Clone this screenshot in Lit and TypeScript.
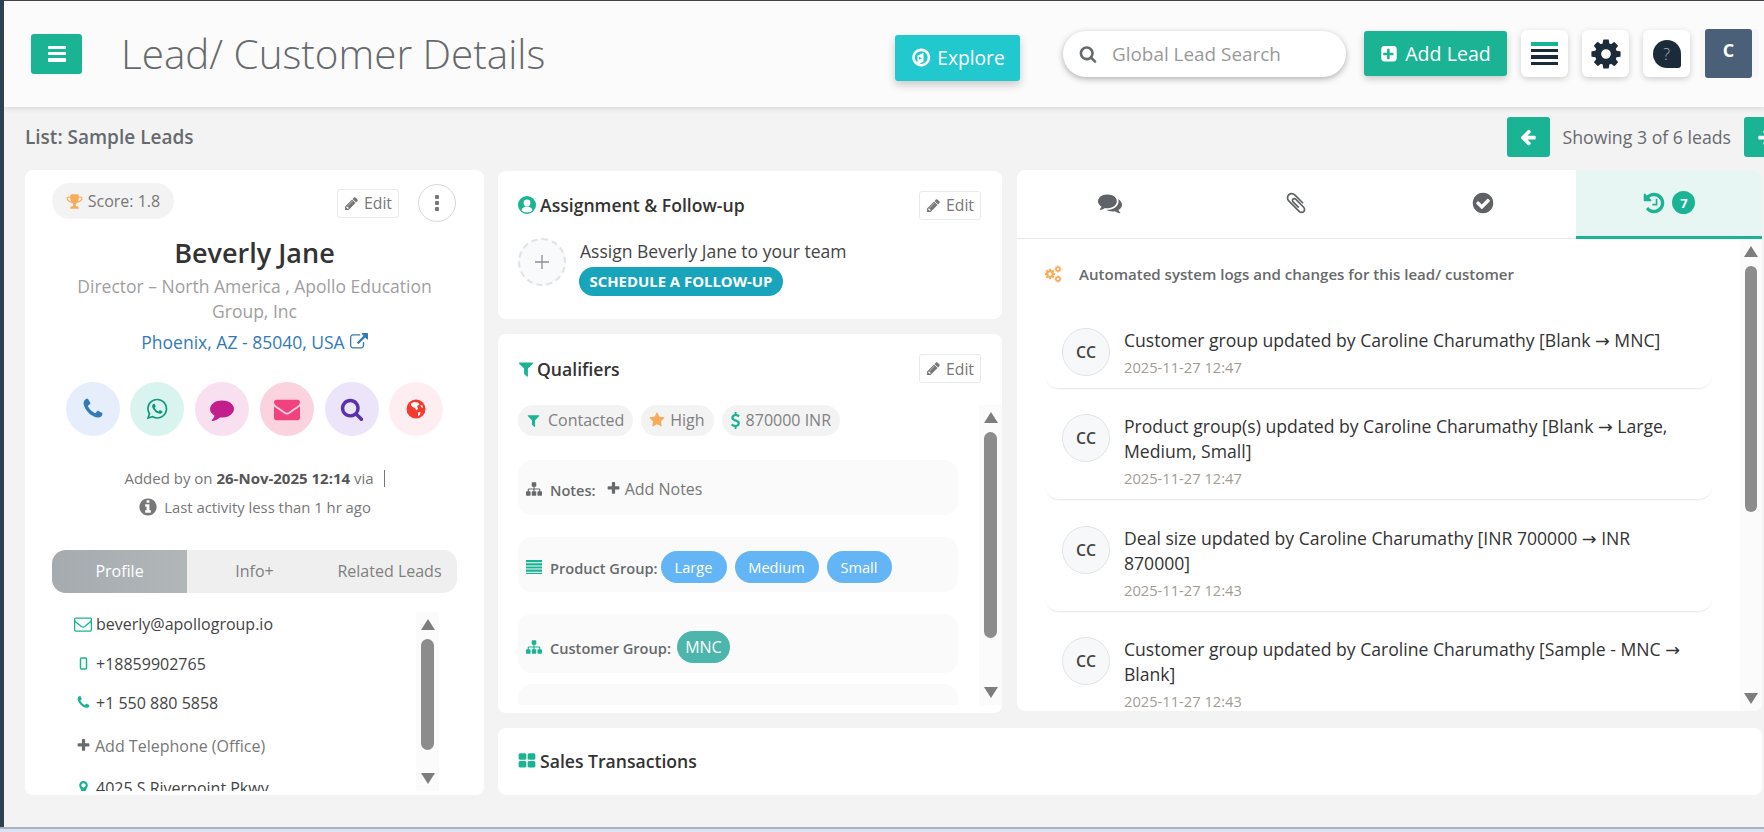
import { LitElement, html, css } from "lit";
import { customElement } from "lit/decorators.js";

const P: Record<string, string> = {
  search: "M1216 832q0-185-131.500-316.500t-316.500-131.500-316.500 131.500-131.500 316.500 131.500 316.500 316.500 131.500 316.500-131.500 131.500-316.500zm512 832q0 52-38 90t-90 38q-54 0-90-38l-343-342q-179 124-399 124-143 0-273.500-55.500t-225-150-150-225-55.500-273.500 55.500-273.500 150-225 225-150 273.500-55.500 273.500 55.500 225 150 150 225 55.500 273.500q0 220-124 399l343 343q37 37 37 90z",
  phone: "M1600 1240q0 27-10 70.500t-21 68.500q-21 50-122 106-94 51-186 51-27 0-53-3.500t-57.500-12.500-47-14.500-55.500-20.500-49-18q-98-35-175-83-127-79-264-216t-216-264q-48-77-83-175-3-9-18-49t-20.500-55.500-14.500-47-12.500-57.500-3.500-53q0-92 51-186 56-101 106-122 25-11 68.500-21t70.500-10q14 0 21 3 18 6 53 76 11 19 30 54t35 63.500 31 53.500q3 4 17.500 25t21.500 35.500 7 28.500q0 20-28.500 50t-62 55-62 53-28.500 46q0 9 5 22.500t8.500 20.500 14 24 11.500 19q76 137 174 235t235 174q2 1 19 11.500t24 14 20.500 8.500 22.500 5q18 0 46-28.500t53-62 55-62 50-28.500q14 0 28.500 7t35.500 21.500 25 17.500q25 15 53.500 31t63.500 35 54 30q70 35 76 53 3 7 3 21z",
  pencil: "M491 1536l91-91-235-235-91 91v107h128v128h107zm523-928q0-22-22-22-10 0-17 7l-542 542q-7 7-7 17 0 22 22 22 10 0 17-7l542-542q7-7 7-17zm-54-192l416 416-832 832h-416v-416zm683 96q0 53-37 90l-166 166-416-416 166-165q36-38 90-38 53 0 91 38l235 234q37 39 37 91z",
  filter: "M1595 295q17 41-14 70l-493 493v742q0 42-39 59-13 5-25 5-27 0-45-19l-256-256q-19-19-19-45v-486l-493-493q-31-29-14-70 17-39 59-39h1280q42 0 59 39z",
  star: "M1728 647q0 22-26 48l-363 354 86 500q1 7 1 20 0 21-10.500 35.500t-30.500 14.500q-19 0-40-12l-449-236-449 236q-22 12-40 12-21 0-31.500-14.500t-10.500-35.500q0-6 2-20l86-500-364-354q-25-27-25-48 0-37 56-46l502-73 225-455q19-41 49-41t49 41l225 455 502 73q56 9 56 46z",
  envelope: "M1792 710v794q0 66-47 113t-113 47h-1472q-66 0-113-47t-47-113v-794q44 49 101 87 362 246 497 345 57 42 92.500 65.500t94.500 48 110 24.500h2q51 0 110-24.500t94.500-48 92.500-65.500q170-123 498-345 57-39 100-87zm0-294q0 79-49 151t-122 123q-376 261-468 325-10 7-42.500 30.500t-54 38-52 32.500-57.500 27-50 9h-2q-23 0-50-9t-57.500-27-52-32.500-54-38-42.500-30.500q-91-64-262-182.500t-205-142.500q-62-42-117-115.500t-55-136.500q0-78 41.500-130t118.500-52h1472q65 0 112.500 47t47.500 113z",
  envelopeO: "M1664 1504v-768q-32 36-69 66-268 206-426 338-51 43-83 67t-86.500 48.500-102.500 24.500h-2q-48 0-102.500-24.500t-86.500-48.500-83-67q-158-132-426-338-37-30-69-66v768q0 13 9.500 22.500t22.500 9.500h1472q13 0 22.500-9.500t9.500-22.500zm0-1051v-24.500l-.5-13-3-12.500-5.500-9-9-7.500-14-2.500h-1472q-13 0-22.500 9.500t-9.500 22.500q0 168 147 284 193 152 401 317 6 5 35 29.500t46 37.500 44.500 31.500 50.500 27.500 43 9h2q20 0 43-9t50.500-27.500 44.500-31.500 46-37.500 35-29.500q208-165 401-317 54-43 100.500-115.500t46.500-131.500zm128-37v1088q0 66-47 113t-113 47h-1472q-66 0-113-47t-47-113v-1088q0-66 47-113t113-47h1472q66 0 113 47t47 113z",
  marker: "M1152 640q0-106-75-181t-181-75-181 75-75 181 75 181 181 75 181-75 75-181zm256 0q0 109-33 179l-364 774q-16 33-47.500 52t-67.500 19-67.500-19-46.500-52l-365-774q-33-70-33-179 0-212 150-362t362-150 362 150 150 362z",
  plus: "M1600 736v192q0 40-28 68t-68 28h-416v416q0 40-28 68t-68 28h-192q-40 0-68-28t-28-68v-416h-416q-40 0-68-28t-28-68v-192q0-40 28-68t68-28h416v-416q0-40 28-68t68-28h192q40 0 68 28t28 68v416h416q40 0 68 28t28 68z",
  trophy: "M522 883q-74-162-74-371h-256v96q0 78 94.500 162t235.500 113zm1078-275v-96h-256q0 209-74 371 141-29 235.500-113t94.500-162zm128-128v128q0 71-41.500 143t-112 130-173 97.500-215.500 44.500q-42 54-95 95-38 34-52.500 72.500t-14.500 89.500q0 54 30.500 91t97.500 37q75 0 133.500 45.500t58.500 114.500v64q0 14-9 23t-23 9h-832q-14 0-23-9t-9-23v-64q0-69 58.500-114.500t133.500-45.500q67 0 97.500-37t30.500-91q0-51-14.500-89.500t-52.500-72.500q-53-41-95-95-113-5-215.500-44.500t-173-97.500-112-130-41.500-143v-128q0-40 28-68t68-28h288v-96q0-66 47-113t113-47h576q66 0 113 47t47 113v96h288q40 0 68 28t28 68z",
  info: "M1152 1376v-160q0-14-9-23t-23-9h-96v-512q0-14-9-23t-23-9h-320q-14 0-23 9t-9 23v160q0 14 9 23t23 9h96v320h-96q-14 0-23 9t-9 23v160q0 14 9 23t23 9h448q14 0 23-9t9-23zm-128-896v-160q0-14-9-23t-23-9h-192q-14 0-23 9t-9 23v160q0 14 9 23t23 9h192q14 0 23-9t9-23zm640 416q0 209-103 385.500t-279.500 279.500-385.500 103-385.500-103-279.500-279.500-103-385.500 103-385.500 279.500-279.500 385.500-103 385.500 103 279.500 279.500 103 385.500z",
  check: "M1412 734q0-28-18-46l-91-90q-19-19-45-19t-45 19l-408 407-226-226q-19-19-45-19t-45 19l-91 90q-18 18-18 46 0 27 18 45l362 362q19 19 45 19 27 0 46-19l543-543q18-18 18-45zm252 162q0 209-103 385.500t-279.500 279.500-385.500 103-385.500-103-279.500-279.500-103-385.500 103-385.500 279.500-279.500 385.500-103 385.500 103 279.500 279.500 103 385.500z",
  plusSq: "M1344 960v-128q0-26-19-45t-45-19h-320v-320q0-26-19-45t-45-19h-128q-26 0-45 19t-19 45v320h-320q-26 0-45 19t-19 45v128q0 26 19 45t45 19h320v320q0 26 19 45t45 19h128q26 0 45-19t19-45v-320h320q26 0 45-19t19-45zm320-576v960q0 119-84.500 203.500t-203.500 84.500h-960q-119 0-203.500-84.500t-84.500-203.500v-960q0-119 84.500-203.500t203.500-84.500h960q119 0 203.500 84.500t84.500 203.500z",
  left: "M1664 896v128q0 53-32.500 90.500t-84.500 37.500h-704l293 294q38 36 38 90t-38 90l-75 76q-37 37-90 37-52 0-91-37l-651-652q-37-37-37-90 0-52 37-91l651-650q38-38 91-38 52 0 90 38l75 74q38 38 38 91t-38 91l-293 293h704q52 0 84.500 37.500t32.500 90.500z",
  ext: "M1408 928v320q0 119-84.500 203.500t-203.500 84.500h-832q-119 0-203.500-84.500t-84.500-203.500v-832q0-119 84.500-203.500t203.500-84.500h704q14 0 23 9t9 23v64q0 14-9 23t-23 9h-704q-66 0-113 47t-47 113v832q0 66 47 113t113 47h832q66 0 113-47t47-113v-320q0-14 9-23t23-9h64q14 0 23 9t9 23zm384-864v512q0 26-19 45t-45 19-45-19l-176-176-652 652q-10 10-23 10t-23-10l-114-114q-10-10-10-23t10-23l652-652-176-176q-19-19-19-45t19-45 45-19h512q26 0 45 19t19 45z",
  comment: "M1792 896q0 174-120 321.500t-326 233-450 85.500q-70 0-145-8-198 175-460 242-49 14-114 22-17 2-30.500-9t-17.500-29v-1q-3-4-.5-12t2-10 4.500-9.500l6-9 7-8.500 8-9q7-8 31-34.500t34.500-38 31-39.500 32.500-51 27-59 26-76q-157-89-247.500-220t-90.500-281q0-130 71-248.500t191-204.500 286-136.500 348-50.500q244 0 450 85.500t326 233 120 321.500z",
  comments: "M1408 768q0 139-94 257t-256.500 186.500-353.500 68.500q-86 0-176-16-124 88-278 128-36 9-86 16h-3q-11 0-20.500-8t-11.500-21q-1-3-1-6.500t.5-6.500 2-6l2.500-5 3.500-5.500 4-5 4.500-5 4-4.500q5-6 23-25t26-29.500 22.500-29 25-38.500 20.500-44q-124-72-195-177t-71-224q0-139 94-257t256.500-186.500 353.500-68.500 353.500 68.500 256.500 186.500 94 257zm384 256q0 120-71 224.500t-195 176.500q10 24 20.500 44t25 38.500 22.500 29 26 29.500 23 25q1 1 4 4.500t4.500 5 4 5 3.500 5.500l2.500 5 2 6 .5 6.500-1 6.500q-3 14-13 22t-22 7q-50-7-86-16-154-40-278-128-90 16-176 16-271 0-472-132 58 4 88 4 161 0 309-45t264-129q125-92 192-212t67-254q0-77-23-152 129 71 204 178t75 230z",
  clip: "M1596 1385q0 117-79 196t-196 79q-135 0-235-100l-777-776q-113-115-113-271 0-159 110-270t269-111q158 0 273 113l605 606q10 10 10 22 0 16-30.500 46.500t-46.500 30.500q-13 0-23-10l-606-607q-79-77-181-77-106 0-179 75t-73 181q0 105 76 181l776 777q63 63 145 63 64 0 106-42t42-106q0-82-63-145l-581-581q-26-24-60-24-29 0-48 19t-19 48q0 32 25 59l410 410q10 10 10 22 0 16-31 47t-47 31q-12 0-22-10l-410-410q-63-61-63-149 0-82 57-139t139-57q88 0 149 63l581 581q100 98 100 235z",
  history: "M1664 896q0 156-61 298t-164 245-245 164-298 61q-172 0-327-72.500t-264-204.500q-7-10-6.500-22.500t8.500-20.500l137-138q10-9 25-9 16 2 23 12 73 95 179 147t225 52q104 0 198.500-40.500t163.500-109.500 109.500-163.500 40.500-198.500-40.500-198.500-109.500-163.500-163.500-109.500-198.500-40.500q-98 0-188 35.500t-160 101.500l137 138q31 30 14 69-17 40-59 40h-448q-26 0-45-19t-19-45v-448q0-42 40-59 39-17 69 14l130 129q107-101 244.500-156.500t284.500-55.500q156 0 298 61t245 164 164 245 61 298zm-512-288v448q0 14-9 23t-23 9h-320q-14 0-23-9t-9-23v-64q0-14 9-23t23-9h224v-352q0-14 9-23t23-9h64q14 0 23 9t9 23z",
  cog: "M1152 896q0-106-75-181t-181-75-181 75-75 181 75 181 181 75 181-75 75-181zm512-109v222q0 12-8 23t-20 13l-185 28q-19 54-39 91 35 50 107 138 10 12 10 25t-9 23q-27 37-99 108t-94 71q-12 0-26-9l-138-108q-44 23-91 38-16 136-29 186-7 28-36 28h-222q-14 0-24.500-8.500t-11.500-21.500l-28-184q-49-16-90-37l-141 107q-10 9-25 9-14 0-25-11-126-114-165-168-7-10-7-23 0-12 8-23 15-21 51-66.500t54-70.500q-27-50-41-99l-183-27q-13-2-21-12.500t-8-23.500v-222q0-12 8-23t19-13l186-28q14-46 39-92-40-57-107-138-10-12-10-24 0-10 9-23 26-36 98.500-107.500t94.500-71.500q13 0 26 10l138 107q44-23 91-38 16-136 29-186 7-28 36-28h222q14 0 24.500 8.500t11.500 21.500l28 184q49 16 90 37l142-107q9-9 24-9 13 0 25 10 129 119 165 170 7 8 7 22 0 12-8 23-15 21-51 66.500t-54 70.500q26 50 41 98l183 28q13 2 21 12.500t8 23.500z",
  sitemap: "M1792 1248v320q0 40-28 68t-68 28h-320q-40 0-68-28t-28-68v-320q0-40 28-68t68-28h96v-192h-512v192h96q40 0 68 28t28 68v320q0 40-28 68t-68 28h-320q-40 0-68-28t-28-68v-320q0-40 28-68t68-28h96v-192h-512v192h96q40 0 68 28t28 68v320q0 40-28 68t-68 28h-320q-40 0-68-28t-28-68v-320q0-40 28-68t68-28h96v-192q0-52 38-90t90-38h512v-192h-96q-40 0-68-28t-28-68v-320q0-40 28-68t68-28h320q40 0 68 28t28 68v320q0 40-28 68t-68 28h-96v192h512q52 0 90 38t38 90v192h96q40 0 68 28t28 68z",
  thLarge: "M832 1024v384q0 52-38 90t-90 38h-512q-52 0-90-38t-38-90v-384q0-52 38-90t90-38h512q52 0 90 38t38 90zm0-768v384q0 52-38 90t-90 38h-512q-52 0-90-38t-38-90v-384q0-52 38-90t90-38h512q52 0 90 38t38 90zm896 768v384q0 52-38 90t-90 38h-512q-52 0-90-38t-38-90v-384q0-52 38-90t90-38h512q52 0 90 38t38 90zm0-768v384q0 52-38 90t-90 38h-512q-52 0-90-38t-38-90v-384q0-52 38-90t90-38h512q52 0 90 38t38 90z",
  whatsapp: "M1113 974q13 0 97.500 44t89.500 53q2 5 2 15 0 33-17 76-16 39-71 65.500t-102 26.500q-57 0-190-62-98-45-170-118t-148-185q-72-107-71-194v-8q3-91 74-158 24-22 52-22 6 0 18 1.500t19 1.500q19 0 26.500 6.500t15.500 27.500q8 20 33 88t25 75q0 21-34.500 57.500t-34.500 46.500q0 7 5 15 34 73 102 137 56 53 151 101 12 7 22 7 15 0 54-48.500t52-48.500zm-203 530q127 0 243.500-50t200.500-134 134-200.500 50-243.500-50-243.500-134-200.500-200.500-134-243.500-50-243.500 50-200.500 134-134 200.500-50 243.500q0 203 120 368l-79 233 242-77q158 104 345 104zm0-1382q153 0 292.500 60t240.500 161 161 240.500 60 292.500-60 292.500-161 240.500-240.500 161-292.500 60q-195 0-365-94l-417 134 136-405q-108-178-108-389 0-153 60-292.500t161-240.500 240.500-161 292.500-60z",
  dollar: "M1362 1185q0 153-99.500 263.500t-258.500 136.500v175q0 14-9 23t-23 9h-135q-13 0-22.500-9.500t-9.500-22.500v-175q-66-9-127.500-31t-101.500-44.500-74-48-46.500-37.500-17.500-18q-17-21-2-41l103-135q7-10 23-12 15-2 24 9l2 2q113 99 243 125 37 8 74 8 81 0 142.500-43t61.500-122q0-28-15-53t-33.500-42-58.500-37.500-66-32-80-32.500q-39-16-61.500-25t-61.500-26.500-62.500-31-56.500-35.500-53.500-42.500-43.500-49-35.500-58-21-66.500-8.500-78q0-138 98-242t255-134v-180q0-13 9.500-22.500t22.500-9.500h135q14 0 23 9t9 23v176q57 6 110.500 23t87 33.500 63.500 37.500 39 29 15 14q17 18 5 38l-81 146q-8 15-23 16-14 3-27-7-3-3-14.500-12t-39-26.500-58.500-32-74.500-26-85.500-11.500q-95 0-155 43t-60 111q0 26 8.500 48t29.500 41.500 39.500 33 56 31 60.500 27 70 27.500q53 20 81 31.500t76 35 75.500 42.500 62 50 53 63.500 31.500 76.500 13 94z",
  compass: "M768 1088l256-128-256-128v256zm384-591v766l-512 256v-766zm352 399q0-148-73-273t-198-198-273-73-273 73-198 198-73 273 73 273 198 198 273 73 273-73 198-198 73-273zm224 0q0 209-103 385.500t-279.500 279.500-385.500 103-385.500-103-279.500-279.500-103-385.500 103-385.500 279.500-279.500 385.500-103 385.500 103 279.500 279.500 103 385.500z",
};

const ic = (name: string, cls: string) => html`<svg class="ic ${cls}" viewBox="0 0 1792 1792" fill="currentColor"><path d="${P[name]}"></path></svg>`;

const bar = () => html`<div class="sbar"><i class="up"></i><i class="thumb"></i><i class="down"></i></div>`;

const edit = () => html`<span class="edit">${ic("pencil", "s15")}Edit</span>`;

@customElement("app-root")
export class AppRoot extends LitElement {
  static styles = css`
    :host { display: block; width: 1764px; height: 832px; overflow: hidden; font-family: "Open Sans", "DejaVu Sans", sans-serif; color: #676a6c; background: #f3f3f4; }
    * { box-sizing: border-box; }
    .ic { display: block; flex: none; }
    .s13 { width: 13px; height: 13px; } .s15 { width: 15px; height: 15px; } .s16 { width: 16px; height: 16px; }
    .s17 { width: 17px; height: 17px; } .s18 { width: 18px; height: 18px; } .s20 { width: 20px; height: 20px; } .s21 { width: 21px; height: 21px; } .s24 { width: 24px; height: 24px; } .s26 { width: 26px; height: 26px; } .s34 { width: 34px; height: 34px; }
    .teal { color: #1ab394; } .orange { color: #f8ac59; } .grey { color: #676a6c; }

    .shell { display: flex; height: 827px; }
    .strip { width: 4px; flex: none; background: #2f4050; }
    .main { width: 1760px; flex: none; display: flex; flex-direction: column; overflow: hidden; border-top: 1.5px solid #3e4347; }
    .foot { height: 5px; background: #dbe4f6; border-top: 2px solid #aab2c2; }

    .hdr { height: 105.5px; flex: none; display: flex; align-items: center; background: #fbfbfb; padding: 0 5px 0 27px; box-shadow: 0 1px 6px rgba(0,0,0,.14); position: relative; }
    .toggle { width: 51px; height: 40px; border-radius: 3px; background: #1ab394; display: flex; align-items: center; justify-content: center; }
    .burger { width: 18px; display: flex; flex-direction: column; gap: 3px; }
    .burger i { display: block; height: 3.4px; border-radius: 1px; background: #fff; }
    .title { margin: 0 0 0 39px; font-size: 40.4px; font-weight: 300; color: #676a6c; line-height: 1; white-space: nowrap; }
    .explore { margin: 8px 0 0 auto; width: 125px; height: 46px; border-radius: 3px; background: #21c8cd; color: #fff; display: flex; align-items: center; justify-content: center; gap: 6px; font-size: 19.2px; font-weight: 400; box-shadow: 0 4px 8px rgba(0,0,0,.2); }
    .search { margin-left: 43px; width: 283px; height: 46px; border-radius: 23px; background: #fff; display: flex; align-items: center; gap: 15px; padding-left: 16px; font-size: 18.9px; color: #999; box-shadow: 0 2px 6px rgba(0,0,0,.3); }
    .add { margin-left: 18px; width: 143px; height: 45px; border-radius: 3px; background: #1ab394; color: #fff; display: flex; align-items: center; justify-content: center; gap: 7px; font-size: 19.6px; font-weight: 400; box-shadow: 0 3px 7px rgba(0,0,0,.2); }
    .tool { width: 47px; height: 47px; border-radius: 6px; background: #fff; display: flex; align-items: center; justify-content: center; box-shadow: 0 2px 6px rgba(0,0,0,.18); color: #1c2b39; margin-left: 14px; }
    .rows { width: 27px; display: flex; flex-direction: column; gap: 3px; }
    .rows i { display: block; height: 3.4px; background: #1c2b39; }
    .rows i:first-child { background: #1ab394; }
    .bubble { width: 28px; height: 28px; border-radius: 14px 14px 3px 14px; background: #1c2b39; color: #aab3bb; font-size: 16px; font-weight: 300; display: flex; align-items: center; justify-content: center; }
    .avwrap { margin-left: 10px; padding: 0 7px 0 5px; background: #f7f7f7; border-radius: 3px; display: flex; }
    .av { width: 47px; height: 49px; border-radius: 3px; background: #4a6078; color: #fff; font-weight: 700; font-size: 18px; display: flex; justify-content: center; padding-top: 10px; line-height: 22px; }

    .sub { width: 1783px; flex: none; height: 63px; padding: 0 0 3px 21px; display: flex; align-items: center; justify-content: space-between; }
    .listlbl { font-size: 19px; font-weight: 600; color: #676a6c; }
    .pager { display: flex; align-items: center; font-size: 17.7px; color: #676a6c; gap: 13px; }
    .pg { width: 43px; height: 40px; border-radius: 3px; background: #1ab394; color: #fff; display: flex; align-items: center; justify-content: center; }
    .flip { transform: scaleX(-1); }

    .content { flex: 1; display: flex; gap: 14px; padding-left: 21px; min-height: 0; }
    .card { background: #fff; border-radius: 8px; flex: none; }

    .c1 { width: 459px; height: 625px; display: flex; flex-direction: column; overflow: hidden; }
    .c1top { display: flex; align-items: center; margin: 14px 28px 0 27px; height: 39px; }
    .score { height: 36px; width: 122px; border-radius: 18px; background: #f3f3f4; display: flex; align-items: center; justify-content: center; gap: 5px; font-size: 16px; color: #777; margin-top: -4px; }
    .edit { display: inline-flex; width: 62px; height: 29px; align-items: center; justify-content: center; gap: 5px; border: 1px solid #e7eaec; border-radius: 3px; background: #fff; font-size: 15.75px; color: #777; flex: none; }
    .c1top .edit { margin-left: auto; }
    .kebab { width: 38px; height: 38px; border-radius: 50%; border: 1px solid #d8d8d8; margin-left: 19px; display: flex; flex-direction: column; gap: 2.5px; align-items: center; justify-content: center; }
    .kebab i { display: block; width: 3.5px; height: 3.5px; background: #777; border-radius: 1px; }
    .name { margin: 12px 0 0; text-align: center; font-size: 27px; font-weight: 600; line-height: 36px; color: #333; }
    .role { margin: 3px 40px 0; text-align: center; font-size: 17.5px; line-height: 25px; color: #a0a0a0; }
    .loc { margin-top: 6px; display: flex; justify-content: center; align-items: center; gap: 5px; font-size: 17.5px; line-height: 25px; color: #337ab7; }
    .acts { display: flex; justify-content: center; gap: 10.8px; margin-top: 27px; }
    .act { width: 54px; height: 54px; border-radius: 50%; display: flex; align-items: center; justify-content: center; }
    .a1 { background: #e6eefb; color: #337ab7; } .a2 { background: #d9f3ee; color: #13967f; } .a3 { background: #f8e0f1; color: #c21f8c; }
    .a4 { background: #fbd3de; color: #f2417f; } .a5 { background: #ece4f9; color: #5a30ae; } .a6 { background: #ffeef1; color: #f43b2d; }
    .added { margin-top: 30px; display: flex; justify-content: center; font-size: 15px; line-height: 25px; color: #777; white-space: pre; }
    .added b { font-weight: 700; color: #555; }
    .sep { width: 1px; height: 17px; background: #777; margin: 4px 0 0 10px; }
    .last { margin-top: 4px; display: flex; justify-content: center; align-items: center; gap: 6px; font-size: 14.85px; line-height: 25px; color: #777; }
    .ptabs { margin: 30px 27px 0; height: 43px; display: flex; border-radius: 14px; background: #efefef; overflow: hidden; flex: none; }
    .ptabs span { flex: 1; display: flex; align-items: center; justify-content: center; font-size: 16px; color: #808080; }
    .ptabs .on { background: linear-gradient(90deg, #a6abaf, #b1b6b9); color: #fff; }
    .pbody { margin: 19px 45px 0 0; height: 179px; display: flex; }
    .plist { flex: 1; overflow: hidden; padding: 1px 0 0 49px; font-size: 16px; color: #444; }
    .prow { height: 22px; display: flex; align-items: center; }
    .prow > span { white-space: nowrap; }
    .prow .slot { width: 22px; flex: none; display: flex; justify-content: center; padding-right: 4px; }
    .m18 { margin-bottom: 18px; } .m17 { margin-bottom: 17px; } .m21 { margin-bottom: 21px; } .m20 { margin-bottom: 20px; }
    .addt { color: #777; padding-left: 2px; gap: 4px; }

    .sbar { width: 23px; flex: none; background: #fbfbfb; display: flex; flex-direction: column; align-items: center; padding: 7px 0; }
    .sbar .up { width: 0; height: 0; border-left: 7.5px solid transparent; border-right: 7.5px solid transparent; border-bottom: 11px solid #7d7d7d; flex: none; }
    .sbar .down { width: 0; height: 0; border-left: 7.5px solid transparent; border-right: 7.5px solid transparent; border-top: 11px solid #7d7d7d; flex: none; margin-top: auto; }
    .sbar .thumb { width: 13px; border-radius: 7px; background: #8c8c8c; margin-top: 9px; flex: none; }
    .pbody .sbar .thumb { height: 111px; }
    .qbody .sbar .thumb { height: 206px; }

    .right { width: 1264px; flex: none; display: flex; flex-direction: column; gap: 15px; }
    .rtop { display: flex; gap: 15px; align-items: flex-start; }
    .mid { width: 504px; flex: none; display: flex; flex-direction: column; gap: 15px; padding-top: 1px; }
    .c2 { height: 148px; padding: 20px 21px 0 20px; }
    .chead { display: flex; align-items: center; justify-content: space-between; height: 29px; }
    .ct { display: flex; align-items: center; gap: 4px; font-size: 17.6px; font-weight: 600; color: #333; }
    .qi { margin: 0 -2px 0 -1px; }
    .assign { display: flex; gap: 14px; margin-top: 18px; }
    .plus { width: 48px; height: 48px; border-radius: 50%; border: 2px dashed #dfe3e8; background: #f9fafb; display: flex; align-items: center; justify-content: center; }
    .plus svg { width: 18px; height: 18px; stroke: #8b9096; stroke-width: 1.3; }
    .atext { font-size: 17.55px; line-height: 24px; color: #444; margin-top: 1px; }
    .sched { margin-top: 4px; width: 204px; height: 29px; border-radius: 15px; background: #18a5bb; color: #fff; font-size: 14.9px; font-weight: 700; display: flex; align-items: center; justify-content: center; margin-left: -1px; }

    .c3 { height: 379px; padding: 21px 0 0 20px; overflow: hidden; }
    .c3 .chead { padding-right: 21px; height: 28px; }
    .qbody { display: flex; margin-top: 22px; height: 300px; }
    .qlist { width: 440px; flex: none; overflow: hidden; margin-right: 21px; }
    .chips { display: flex; gap: 8px; height: 31px; }
    .chip { height: 31px; padding: 0 9px 0 8px; border-radius: 16px; background: #f3f3f4; display: flex; align-items: center; gap: 7px; font-size: 16px; color: #808080; }
    .dlr { margin: 0 -5px 0 -3px; }
    .str { margin-right: -2px; }
    .sec { background: #fafafa; border-radius: 14px; display: flex; align-items: center; padding-left: 8px; font-size: 14.6px; font-weight: 600; color: #676a6c; }
    .n { margin-top: 24px; height: 55px; padding-top: 3px; } .pg-sec { margin-top: 22px; height: 55px; padding-top: 5px; } .cg { margin-top: 22px; height: 59px; padding-top: 7px; } .nx { margin-top: 11px; height: 60px; }
    .lbl { margin-left: 8px; white-space: nowrap; padding-top: 2px; }
    .addn { margin-left: 10px; display: flex; align-items: center; gap: 4px; font-weight: 400; font-size: 16px; color: #777; }
    .tag { height: 32px; border-radius: 16px; color: #fff; font-weight: 400; font-size: 14.6px; display: flex; align-items: center; justify-content: center; }
    .blue { background: #64b5f6; margin-left: 8px; } .mnc { background: #4db6ac; width: 53px; margin-left: 6px; font-size: 16px; }
    .blue.first { margin-left: 3px; }
    .w66 { width: 66px; } .w84 { width: 84px; } .w65 { width: 65px; }

    .c4 { width: 745px; height: 541px; display: flex; flex-direction: column; overflow: hidden; }
    .ltabs { height: 69px; flex: none; display: flex; border-bottom: 1px solid #e7eaec; }
    .ltabs > div { flex: 1; display: flex; align-items: center; justify-content: center; color: #5f6367; gap: 6px; padding-bottom: 2px; }
    .ltabs .active { background: #e8f6f3; border-bottom: 3px solid #1ab394; margin-bottom: -1px; color: #1ab394; padding-bottom: 0; }
    .badge { width: 23px; height: 23px; border-radius: 50%; background: #1ab394; color: #fff; font-size: 13px; font-weight: 700; display: flex; align-items: center; justify-content: center; }
    .lbody { flex: 1; display: flex; min-height: 0; }
    .logs { flex: 1; overflow: hidden; min-width: 0; }
    .lhead { margin: 25px 0 0 27px; height: 20px; display: flex; align-items: center; gap: 17px; font-size: 15.05px; font-weight: 600; color: #676a6c; }
    .cogs { width: 18px; height: 18px; color: #f8ac59; }
    .item { margin: 11.5px 0 0 28px; width: 667px; padding: 14px 17px 9px; display: flex; gap: 14px; border-radius: 14px; border-bottom: 1px solid #e9ecef; box-shadow: 0 1px 1px rgba(0,0,0,.03); }
    .item.firsti { margin-top: 30px; }
    .cc { width: 48px; height: 48px; flex: none; border-radius: 50%; background: #f7f8fa; border: 1px solid #e1e4e8; display: flex; align-items: center; justify-content: center; font-size: 15.75px; font-weight: 600; color: #444; }
    .msg { font-size: 17.6px; line-height: 25px; color: #333; flex: 1; }
    .time { font-size: 14.7px; line-height: 24px; margin-top: 2px; color: #a39c92; }
    .lbody .sbar { width: 22px; }
    .lbody .sbar .thumb { width: 12px; height: 246px; }
    .sales { width: 1264px; height: 67px; padding: 20px 0 0 20px; }
    .sales .ct { height: 26px; }
  `;

  render() {
    const item = (msg: string, t: string, first = false) => html`
      <div class="item ${first ? "firsti" : ""}">
        <div class="cc">CC</div>
        <div class="msg">${msg}<div class="time">${t}</div></div>
      </div>`;
    return html`
      <div class="shell">
        <div class="strip"></div>
        <div class="main">
          <header class="hdr">
            <div class="toggle"><div class="burger"><i></i><i></i><i></i></div></div>
            <h1 class="title">Lead/ Customer Details</h1>
            <div class="explore">${ic("compass", "s21")}Explore</div>
            <div class="search">${ic("search", "s18 grey")}<span>Global Lead Search</span></div>
            <div class="add">${ic("plusSq", "s18")}Add Lead</div>
            <div class="tool"><div class="rows"><i></i><i></i><i></i><i></i></div></div>
            <div class="tool">${ic("cog", "s34")}</div>
            <div class="tool"><div class="bubble">?</div></div>
            <div class="avwrap"><div class="av">C</div></div>
          </header>
          <div class="sub">
            <div class="listlbl">List: Sample Leads</div>
            <div class="pager">
              <div class="pg">${ic("left", "s18")}</div>
              <span>Showing 3 of 6 leads</span>
              <div class="pg">${ic("left", "s18 flip")}</div>
            </div>
          </div>
          <div class="content">
            <section class="card c1">
              <div class="c1top">
                <div class="score">${ic("trophy", "s17 orange")}Score: 1.8</div>
                ${edit()}
                <div class="kebab"><i></i><i></i><i></i></div>
              </div>
              <h2 class="name">Beverly Jane</h2>
              <div class="role">Director – North America , Apollo Education Group, Inc</div>
              <div class="loc">Phoenix, AZ - 85040, USA ${ic("ext", "s18")}</div>
              <div class="acts">
                <div class="act a1">${ic("phone", "s24")}</div>
                <div class="act a2">${ic("whatsapp", "s24")}</div>
                <div class="act a3">${ic("comment", "s24")}</div>
                <div class="act a4">${ic("envelope", "s26")}</div>
                <div class="act a5">${ic("search", "s24")}</div>
                <div class="act a6">
                  <svg class="ic s20" viewBox="0 0 20 20"><circle cx="10" cy="10" r="9.5" fill="currentColor"></circle><path fill="#fff" d="M5 4.500l3-1.500 4 .5 1.500 2-2.500 1.500 1 2.500-1.500 2-1.500-2.500-3-1.500-1-1.500zM12 13.500l2.500-.5-.5 3-2 1zM14.500 6l2 .5.5 2.500-2-1z"></path></svg>
                </div>
              </div>
              <div class="added">Added by on <b>26-Nov-2025 12:14</b> via<i class="sep"></i></div>
              <div class="last">${ic("info", "s20")}Last activity less than 1 hr ago</div>
              <div class="ptabs"><span class="on">Profile</span><span>Info+</span><span>Related Leads</span></div>
              <div class="pbody">
                <div class="plist">
                  <div class="prow m18"><div class="slot">${ic("envelopeO", "s18 teal")}</div><span>beverly@apollogroup.io</span></div>
                  <div class="prow m17"><div class="slot">
                    <svg class="ic s13 teal" viewBox="0 0 13 13"><rect x="3.500" y="1" width="6" height="11" rx="1" fill="none" stroke="currentColor" stroke-width="1.500"></rect></svg>
                  </div><span>+18859902765</span></div>
                  <div class="prow m21"><div class="slot">${ic("phone", "s15 teal")}</div><span>+1 550 880 5858</span></div>
                  <div class="prow m20 addt">${ic("plus", "s15 grey")}<span>Add Telephone (Office)</span></div>
                  <div class="prow"><div class="slot">${ic("marker", "s15 teal")}</div><span>4025 S Riverpoint Pkwy</span></div>
                </div>
                ${bar()}
              </div>
            </section>
            <div class="right">
              <div class="rtop">
                <div class="mid">
                  <section class="card c2">
                    <div class="chead">
                      <div class="ct">
                        <svg class="ic s18 teal" viewBox="0 0 18 18"><circle cx="9" cy="9" r="9" fill="currentColor"></circle><circle cx="9" cy="7" r="3.400" fill="#fff"></circle><path fill="#fff" d="M3.500 14.500c.6-3 3-4 5.500-4s4.900 1 5.500 4c-1.400 1.300-3.300 2-5.500 2s-4.100-.7-5.500-2z"></path></svg>
                        Assignment &amp; Follow-up
                      </div>
                      ${edit()}
                    </div>
                    <div class="assign">
                      <div class="plus"><svg viewBox="0 0 18 18"><path d="M9 2v14M2 9h14"></path></svg></div>
                      <div>
                        <div class="atext">Assign Beverly Jane to your team</div>
                        <div class="sched">SCHEDULE A FOLLOW-UP</div>
                      </div>
                    </div>
                  </section>
                  <section class="card c3">
                    <div class="chead">
                      <div class="ct">${ic("filter", "s18 teal qi")}Qualifiers</div>
                      ${edit()}
                    </div>
                    <div class="qbody">
                      <div class="qlist">
                        <div class="chips">
                          <div class="chip">${ic("filter", "s15 teal")}Contacted</div>
                          <div class="chip">${ic("star", "s16 orange str")}High</div>
                          <div class="chip">${ic("dollar", "s17 teal dlr")}870000 INR</div>
                        </div>
                        <div class="sec n">${ic("sitemap", "s16 grey")}<span class="lbl">Notes:</span><span class="addn">${ic("plus", "s15 grey")}Add Notes</span></div>
                        <div class="sec pg-sec">
                          <svg class="ic s16 teal" viewBox="0 0 16 16" fill="currentColor"><path d="M0 1h16v2.200H0zM0 4.200h16v2.200H0zM0 7.400h16v2.200H0zM0 10.600h16v2.200H0z"></path><path d="M0 13.800h16V15H0z"></path></svg>
                          <span class="lbl">Product Group:</span>
                          <span class="tag blue first w66">Large</span><span class="tag blue w84">Medium</span><span class="tag blue w65">Small</span>
                        </div>
                        <div class="sec cg">${ic("sitemap", "s16 teal")}<span class="lbl">Customer Group:</span><span class="tag mnc">MNC</span></div>
                        <div class="sec nx"></div>
                      </div>
                      ${bar()}
                    </div>
                  </section>
                </div>
                <section class="card c4">
                  <div class="ltabs">
                    <div>${ic("comments", "s24")}</div>
                    <div>${ic("clip", "s24")}</div>
                    <div>${ic("check", "s24")}</div>
                    <div class="active">${ic("history", "s24")}<span class="badge">7</span></div>
                  </div>
                  <div class="lbody">
                    <div class="logs">
                      <div class="lhead">
                        <svg class="ic cogs" viewBox="0 0 18 18"><svg x="0" y="3" width="12" height="12" viewBox="0 0 1792 1792" fill="currentColor"><path d="${P.cog}"></path></svg><svg x="10" y="0" width="8" height="8" viewBox="0 0 1792 1792" fill="currentColor"><path d="${P.cog}"></path></svg><svg x="10" y="10" width="8" height="8" viewBox="0 0 1792 1792" fill="currentColor"><path d="${P.cog}"></path></svg></svg>
                        Automated system logs and changes for this lead/ customer
                      </div>
                      ${item("Customer group updated by Caroline Charumathy [Blank → MNC]", "2025-11-27 12:47", true)}
                      ${item("Product group(s) updated by Caroline Charumathy [Blank → Large, Medium, Small]", "2025-11-27 12:47")}
                      ${item("Deal size updated by Caroline Charumathy [INR 700000 → INR 870000]", "2025-11-27 12:43")}
                      ${item("Customer group updated by Caroline Charumathy [Sample - MNC → Blank]", "2025-11-27 12:43")}
                    </div>
                    ${bar()}
                  </div>
                </section>
              </div>
              <section class="card sales">
                <div class="ct">${ic("thLarge", "s18 teal")}Sales Transactions</div>
              </section>
            </div>
          </div>
        </div>
      </div>
      <div class="foot"></div>
    `;
  }
}
